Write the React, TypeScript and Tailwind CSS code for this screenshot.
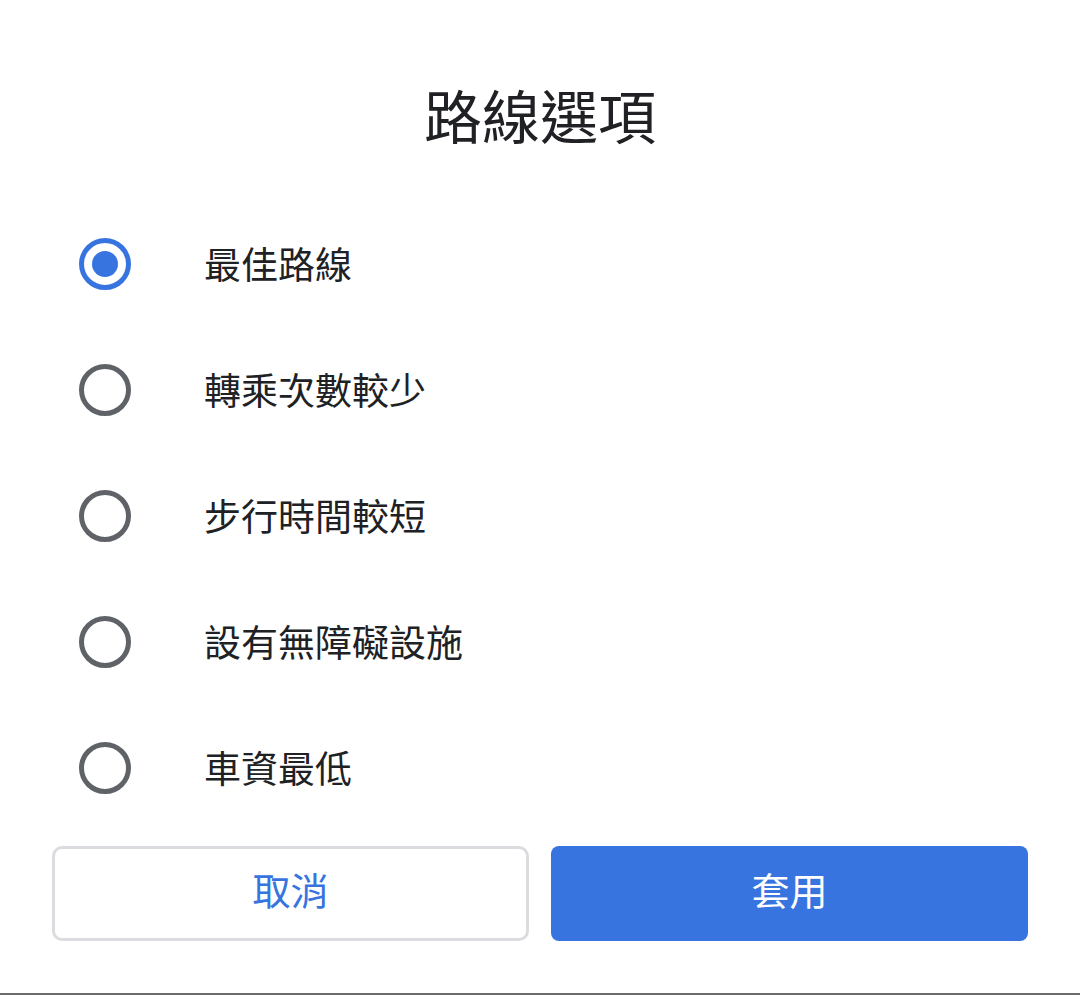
import { useState } from "react"

const options = ["最佳路線", "轉乘次數較少", "步行時間較短", "設有無障礙設施", "車資最低"]

export default function App() {
  const [selected, setSelected] = useState(0)

  return (
    <div
      className="w-[1080px] h-[995px] bg-white flex flex-col border-b-2 border-[#6b6b6b]"
      style={{ fontFamily: '"Noto Sans CJK TC", "Noto Sans", sans-serif' }}
    >
      <h1 className="pt-[77px] h-[201px] text-center text-[58px] leading-[74px] text-[#202124]">路線選項</h1>

      {/* Options */}
      <div className="flex flex-col">
        {options.map((label, i) => (
          <button
            key={label}
            onClick={() => setSelected(i)}
            className="h-[126px] flex items-center pl-[79px] text-left"
          >
            {selected === i ? (
              <span className="w-[52px] h-[52px] rounded-full border-[5px] border-[#3874e0] flex items-center justify-center">
                <span className="w-[26px] h-[26px] rounded-full bg-[#3874e0]" />
              </span>
            ) : (
              <span className="w-[52px] h-[52px] rounded-full border-[5px] border-[#5f6368]" />
            )}
            <span className="ml-[73px] text-[37px] text-[#202124]">{label}</span>
          </button>
        ))}
      </div>

      {/* Actions */}
      <div className="mt-[15px] px-[52px] flex gap-[22px]">
        <button className="w-[477px] h-[95px] pb-[10px] rounded-[10px] border-[3px] border-[#dadce0] bg-white text-[38px] text-[#3874e0]">
          取消
        </button>
        <button className="w-[477px] h-[95px] pb-[10px] rounded-[8px] bg-[#3874e0] text-[38px] text-white">套用</button>
      </div>
    </div>
  )
}
